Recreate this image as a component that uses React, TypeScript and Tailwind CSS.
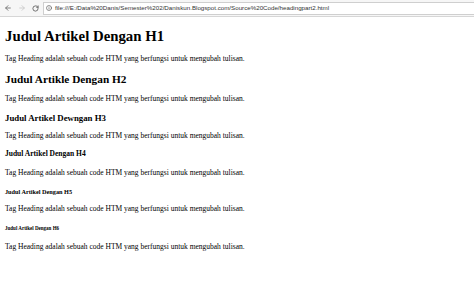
import { ArrowLeft, ArrowRight, RotateCw, Info } from "lucide-react"

const URL_TEXT =
  "file:///E:/Data%20Danis/Semester%202/Daniskun.Blogspot.com/Source%20Code/headingpart2.html"

const PARA = "Tag Heading adalah sebuah code HTM yang berfungsi untuk mengubah tulisan."

export default function App() {
  return (
    <div className="w-[474px] h-[294px] bg-white overflow-hidden font-['Liberation_Serif',serif] text-black">
      {/* Browser toolbar */}
      <div className="h-[17px] bg-[#f6f6f6] border-b border-[#d6d6d6] flex flex-row items-center">
        <div className="flex flex-row items-center gap-[6px] pl-[4px] w-[43px]">
          <ArrowLeft className="w-[8px] h-[8px] text-[#6a6a6a]" strokeWidth={2.5} />
          <ArrowRight className="w-[8px] h-[8px] text-[#c8c8c8]" strokeWidth={2.5} />
          <RotateCw className="w-[7px] h-[7px] text-[#5a5a5a]" strokeWidth={2.8} />
        </div>
        <div className="flex-1 h-[13px] bg-white border border-[#cfcfcf] border-r-0 flex flex-row items-center gap-[3px] pl-[2px]">
          <Info className="w-[6px] h-[6px] text-[#555]" strokeWidth={2.5} />
          <span className="font-['Liberation_Sans',sans-serif] text-[6.2px] leading-[8px] text-[#333] whitespace-nowrap">
            {URL_TEXT}
          </span>
        </div>
      </div>

      {/* Page body */}
      <div className="px-[5px] pt-[1px] flex flex-col">
        <h1 className="mt-[10px] font-bold text-[14.8px] leading-[17.3px]">Judul Artikel Dengan H1</h1>
        <p className="mt-[10px] text-[7.5px] leading-[8.6px]">{PARA}</p>
        <h2 className="mt-[9.4px] font-bold text-[11.3px] leading-[13px]">Judul Artikle Dengan H2</h2>
        <p className="mt-[9.2px] text-[7.5px] leading-[8.6px]">{PARA}</p>
        <h3 className="mt-[8.6px] font-bold text-[8.8px] leading-[10.1px]">Judul Artikel Dewngan H3</h3>
        <p className="mt-[8.8px] text-[7.5px] leading-[8.6px]">{PARA}</p>
        <h4 className="mt-[10px] font-bold text-[7.5px] leading-[8.6px]">Judul Artikel Dengan H4</h4>
        <p className="mt-[10px] text-[7.5px] leading-[8.6px]">{PARA}</p>
        <h5 className="mt-[10.4px] font-bold text-[6.24px] leading-[7.2px]">Judul Artikel Dengan H5</h5>
        <p className="mt-[10.4px] text-[7.5px] leading-[8.6px]">{PARA}</p>
        <h6 className="mt-[11.7px] font-bold text-[5.04px] leading-[5.8px]">Judul Artikel Dengan H6</h6>
        <p className="mt-[11.9px] text-[7.5px] leading-[8.6px]">{PARA}</p>
      </div>
    </div>
  )
}
